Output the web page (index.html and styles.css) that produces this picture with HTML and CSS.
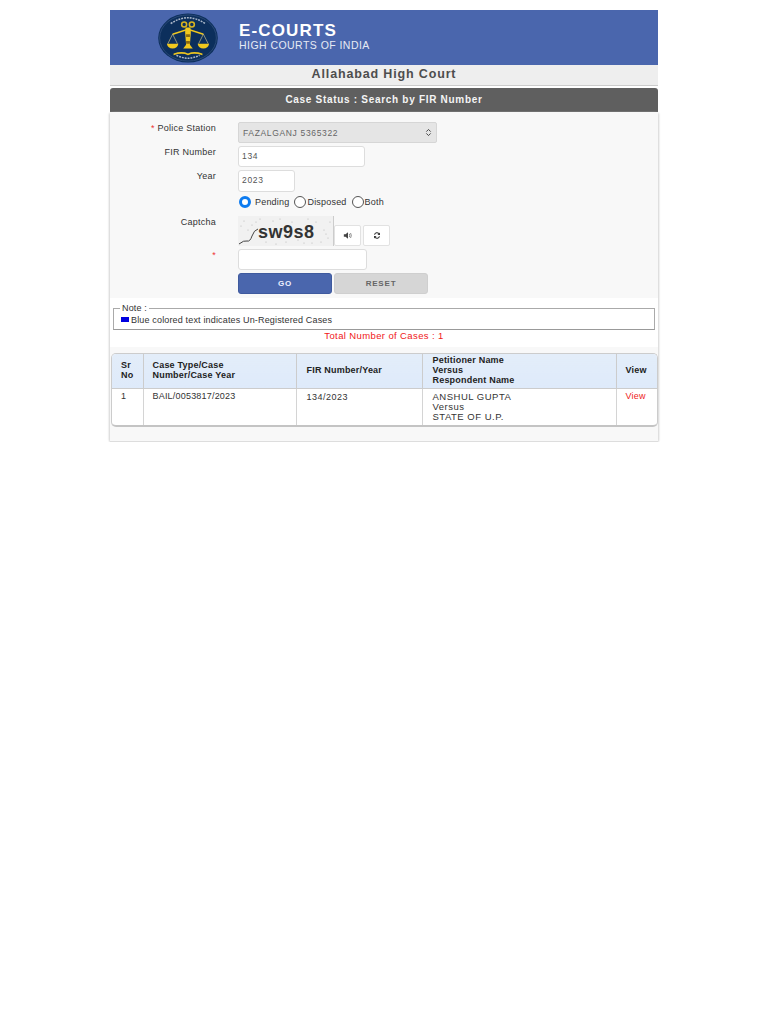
FILE: index.html
```html
<!DOCTYPE html>
<html lang="en">
<head>
<meta charset="utf-8">
<title>Case Status</title>
<link rel="stylesheet" href="styles.css">
</head>
<body>
<div class="page">
  <header class="banner">
    <svg class="logo" viewBox="0 0 64 52" aria-hidden="true">
      <ellipse cx="32" cy="26" rx="31" ry="25.5" fill="#0c2f5c"/>
      <ellipse cx="32" cy="26" rx="29.5" ry="24" fill="none" stroke="#2b4a78" stroke-width="1"/>
      <path d="M14 11 Q32 -1 50 11" fill="none" stroke="#aab6c8" stroke-width="1.600" stroke-dasharray="2 1"/>
      <path d="M20 44 Q32 50 44 44" fill="none" stroke="#aab6c8" stroke-width="1.600" stroke-dasharray="2 1"/>
      <circle cx="28" cy="12" r="2.600" fill="none" stroke="#d9b420" stroke-width="1.600"/>
      <circle cx="36" cy="12" r="2.600" fill="none" stroke="#d9b420" stroke-width="1.600"/>
      <path d="M29.500 15h5l.5 5-1 13 3 4H27l3-4-1-13z" fill="#f0c81e"/>
      <path d="M30 22h4v3h-4zM30 29h4v3h-4z" fill="#8a6a10"/>
      <path d="M16 22 L32 17 L48 22" fill="none" stroke="#f0c81e" stroke-width="1.600"/>
      <path d="M16 22 L11 32 M16 22 L21 32 M48 22 L43 32 M48 22 L53 32" stroke="#c9c08a" stroke-width=".7"/>
      <path d="M10 32h12q-1 5-6 5t-6-5zM42 32h12q-1 5-6 5t-6-5z" fill="#f0c81e"/>
      <path d="M17 42 Q26 39 32 42 Q38 39 47 42 L47 44 Q38 41 32 44 Q26 41 17 44z" fill="#e9c320"/>
    </svg>
    <div class="brand">
      <div class="brand-name">E-COURTS</div>
      <div class="brand-sub">HIGH COURTS OF INDIA</div>
    </div>
  </header>
  <div class="court">Allahabad High Court</div>
  <div class="panel-title">Case Status : Search by FIR Number</div>
  <main class="panel">
    <form class="form">
      <div class="row row-select">
        <label class="label"><span class="req">*</span> Police Station</label>
        <div class="select"><span>FAZALGANJ 5365322</span>
          <svg class="updown" viewBox="0 0 8 10" aria-hidden="true"><path d="M1.500 4 4 1.500 6.500 4M1.500 6 4 8.500 6.500 6" fill="none" stroke="#444" stroke-width="1.100"/></svg>
        </div>
      </div>
      <div class="row row-fir">
        <label class="label">FIR Number</label>
        <div class="input input-fir">134</div>
      </div>
      <div class="row row-year">
        <label class="label">Year</label>
        <div class="input input-year">2023</div>
      </div>
      <div class="row row-radio">
        <span class="label"></span>
        <div class="radios">
          <span class="radio on"></span><span class="radio-text first">Pending</span>
          <span class="radio"></span><span class="radio-text">Disposed</span>
          <span class="radio"></span><span class="radio-text">Both</span>
        </div>
      </div>
      <div class="row row-captcha">
        <label class="label">Captcha</label>
        <div class="captcha-img">
          <svg class="captcha-line" viewBox="0 0 96 30" aria-hidden="true"><path d="M1 28 Q6 24 9 25 T14 20 T20 13" fill="none" stroke="#444" stroke-width="1"/><g fill="#aaa"><circle cx="6" cy="5" r=".5"/><circle cx="14" cy="9" r=".5"/><circle cx="22" cy="3" r=".5"/><circle cx="35" cy="5" r=".5"/><circle cx="48" cy="26" r=".5"/><circle cx="60" cy="24" r=".5"/><circle cx="78" cy="6" r=".5"/><circle cx="86" cy="14" r=".5"/><circle cx="90" cy="22" r=".5"/><circle cx="83" cy="26" r=".5"/><circle cx="28" cy="26" r=".5"/><circle cx="70" cy="3" r=".5"/><circle cx="10" cy="14" r=".5"/><circle cx="3" cy="10" r=".5"/><circle cx="42" cy="3" r=".5"/><circle cx="54" cy="6" r=".5"/><circle cx="92" cy="6" r=".5"/><circle cx="74" cy="27" r=".5"/><circle cx="38" cy="28" r=".5"/><circle cx="66" cy="27" r=".5"/><circle cx="88" cy="18" r=".5"/><circle cx="18" cy="6" r=".5"/></g><path d="M95.500 0V30" stroke="#ccc"/></svg>
          <span class="captcha-text">sw9s8</span>
        </div>
        <div class="icon-btn">
          <svg viewBox="0 0 12 10" aria-hidden="true"><path d="M1 3.500h2L6 1v8L3 6.500H1z" fill="#444"/><path d="M7.500 3q1.200 2 0 4M9 2q2 3 0 6" fill="none" stroke="#666" stroke-width=".9"/></svg>
        </div>
        <div class="icon-btn">
          <svg viewBox="0 0 12 12" aria-hidden="true"><path d="M2 5a4 4 0 0 1 7-2l1-1v3.400H6.600L8 4a2.600 2.600 0 0 0-4.600 1zM10 7a4 4 0 0 1-7 2l-1 1V6.600h3.400L4 8a2.600 2.600 0 0 0 4.600-1z" fill="#333"/></svg>
        </div>
      </div>
      <div class="row row-code">
        <label class="label"><span class="req">*</span></label>
        <div class="input input-code"></div>
      </div>
      <div class="row row-buttons">
        <span class="label"></span>
        <button type="button" class="btn btn-go">GO</button>
        <button type="button" class="btn btn-reset">RESET</button>
      </div>
    </form>
    <div class="results">
      <fieldset class="note">
        <legend>Note :</legend>
        <span class="swatch"></span>Blue colored text indicates Un-Registered Cases
      </fieldset>
      <div class="total">Total Number of Cases : 1</div>
    </div>
    <div class="table-wrap">
      <table class="cases">
        <thead>
          <tr>
            <th class="c1">Sr<br>No</th>
            <th class="c2">Case Type/Case<br>Number/Case Year</th>
            <th class="c3">FIR Number/Year</th>
            <th class="c4">Petitioner Name<br>Versus<br>Respondent Name</th>
            <th class="c5">View</th>
          </tr>
        </thead>
        <tbody>
          <tr>
            <td>1</td>
            <td>BAIL/0053817/2023</td>
            <td class="fir">134/2023</td>
            <td class="parties">ANSHUL GUPTA<br>Versus<br>STATE OF U.P.</td>
            <td><a class="view">View</a></td>
          </tr>
        </tbody>
      </table>
    </div>
  </main>
</div>
</body>
</html>
```
FILE: styles.css
```css
* { box-sizing: border-box; }
html, body { margin: 0; background: #fff; }
body { font-family: "Liberation Sans", Arial, sans-serif; color: #333; }
.page { width: 548px; margin: 0 0 0 110px; padding-top: 10px; }

.banner { height: 55px; background: #4a66ad; display: flex; align-items: center; padding-left: 47px; }
.logo { width: 62px; height: 50px; flex: none; }
.brand { margin-left: 20px; color: #fff; margin-top: -2px; }
.brand-name { font-size: 17px; font-weight: 700; line-height: 18px; letter-spacing: 1.150px; }
.brand-sub { font-size: 10.500px; line-height: 12px; letter-spacing: .45px; color: #e6eaf4; margin-top: -1px; }

.court { height: 21px; background: #eee; border-bottom: 1px solid #ccc; text-align: center; font-size: 12.500px; font-weight: 700; line-height: 19px; letter-spacing: .85px; color: #4d4d4d; }
.panel-title { height: 24px; margin-top: 2px; background: #5f5f5f; border-radius: 3px 3px 0 0; color: #f4f4f4; font-size: 10px; font-weight: 700; line-height: 24px; letter-spacing: .7px; text-align: center; }

.panel { position: relative; background: #f8f8f8; padding-bottom: 14px; border-bottom: 1px solid #ddd; box-shadow: 0 2px 2px #ccc, -2px 0 2px -1px #ddd, 2px 0 2px -1px #ddd; }

.form { padding-top: 10px; height: 186px; }
.row { display: flex; align-items: flex-start; }
.label { width: 106px; margin-right: 22px; flex: none; text-align: right; font-size: 9px; line-height: 12px; letter-spacing: .25px; color: #333; }
.req { color: #e33; }
.row-select { height: 24px; }
.row-fir { height: 24px; }
.row-year { height: 25px; }
.row-radio { height: 21px; }
.row-captcha { height: 33px; }
.row-code { height: 24px; }
.select { width: 199px; height: 21px; background: #e5e5e5; border: 1px solid #d6d6d6; border-radius: 2px; display: flex; align-items: center; justify-content: space-between; padding: 0 4px 0 4px; font-size: 8.500px; letter-spacing: .65px; color: #666; }
.updown { width: 7px; height: 9px; }
.input { height: 21px; background: #fff; border: 1px solid #ddd; border-radius: 3px; font-size: 8.500px; line-height: 19px; letter-spacing: .7px; padding-left: 3px; color: #555; }
.input-fir { width: 127px; }
.input-year { width: 57px; height: 22px; }
.input-code { width: 129px; }

.radios { display: flex; align-items: center; height: 13px; font-size: 9px; letter-spacing: .2px; color: #333; }
.radio { width: 12px; height: 12px; border-radius: 50%; border: 1px solid #555; background: #fff; flex: none; margin-left: 1px; }
.radio.on { border: 3.500px solid #0d7bf0; }
.radio-text { margin-left: 1px; margin-right: 4px; }
.radio-text.first { margin-left: 4px; margin-right: 4px; }

.captcha-img { position: relative; width: 96px; height: 30px; background: #f1f1f1; overflow: hidden; }
.captcha-line { display: block; width: 96px; height: 30px; }
.captcha-text { position: absolute; left: 20px; top: 6px; font-size: 18px; font-weight: 700; line-height: 20px; letter-spacing: .5px; color: #333; }
.icon-btn { width: 27px; height: 21px; margin-top: 9px; margin-right: 2px; background: #fff; border: 1px solid #e2e2e2; border-radius: 2px; display: flex; align-items: center; justify-content: center; }
.icon-btn svg { width: 10px; height: 9px; }

.btn { height: 21px; border-radius: 3px; font-family: inherit; font-size: 8px; font-weight: 700; letter-spacing: .8px; padding: 0; }
.btn-go { width: 94px; background: #4a66ad; color: #eef; border: 1px solid #3f5a9e; }
.btn-reset { width: 94px; margin-left: 2px; background: #d6d6d6; color: #666; border: 1px solid #cfcfcf; }

.results { background: #fff; height: 49px; padding: 6px 3px 0; }
.note { margin: 0; padding: 1px 0 0 7px; height: 26px; width: 542px; border: 1px solid #aaa; border-bottom-color: #999; background: #fff; font-size: 9px; line-height: 14px; letter-spacing: .16px; color: #333; }
.note legend { padding: 0 2px; margin-left: -1px; line-height: 8px; font-size: 9px; }
.swatch { display: inline-block; width: 8px; height: 5px; background: #0000e0; margin-right: 2px; vertical-align: 1px; }
.total { text-align: center; font-size: 9.500px; line-height: 12px; letter-spacing: .38px; color: #f01818; }

.table-wrap { margin: 6px 0 0 1px; border: 1px solid #ccc; border-bottom: 2px solid #c4c4c4; border-radius: 5px; overflow: hidden; background: #fff; }
.cases { width: 100%; border-collapse: collapse; table-layout: fixed; font-size: 9px; letter-spacing: .2px; }
.cases th { height: 34px; background: linear-gradient(#e3edf9, #deeafa); font-weight: 700; text-align: left; line-height: 9.700px; padding: 0 0 0 9px; border-right: 1px solid #ccc; border-bottom: 1px solid #ccc; color: #222; }
.cases td { height: 37px; vertical-align: top; padding: 2px 0 0 9px; border-right: 1px solid #d4d4d4; line-height: 10px; color: #333; }
.cases th:last-child, .cases td:last-child { border-right: 0; }
.c1 { width: 31px; }
.c2 { width: 153px; }
.c3 { width: 126px; }
.c4 { width: 194px; }
.cases th.c3, .cases th.c4, .cases td.fir, .cases td.parties { padding-left: 10px; }
.cases td.fir, .cases td.parties { padding-top: 3px; letter-spacing: .5px; }
.cases td.parties { font-size: 9.500px; }
.view { color: #ee2222; }
```
